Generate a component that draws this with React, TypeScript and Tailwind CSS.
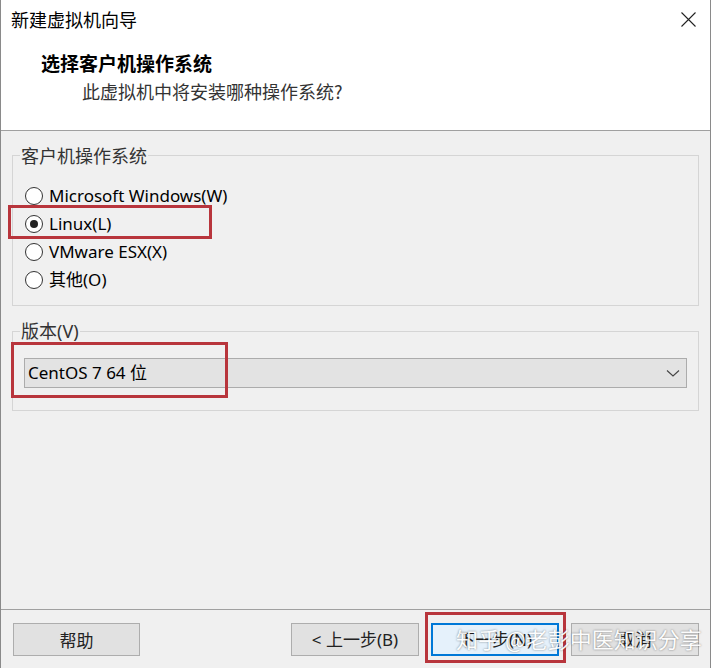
export default function App() {
  const radios = [
    { label: "Microsoft Windows(W)", checked: false },
    { label: "Linux(L)", checked: true },
    { label: "VMware ESX(X)", checked: false },
    { label: "其他(O)", checked: false },
  ];
  return (
    <div className="w-[712px] h-[668px] bg-white">
      <div className="relative w-[711px] h-[668px] bg-[#f0f0f0] border-x border-[#8a8a8a] flex flex-col font-['Noto_Sans','Noto_Sans_CJK_SC',sans-serif] text-black overflow-hidden">
        <header className="h-[131px] bg-white border-b border-[#a0a0a0] shrink-0">
          <div className="h-[38px] flex items-center justify-between pl-[10px] pr-[14px]">
            <span className="text-[18px] leading-[22px] font-['Noto_Sans_CJK_SC',sans-serif]">新建虚拟机向导</span>
            <svg width="15" height="15" viewBox="0 0 15 15">
              <path d="M0.5 0.5L14.5 14.5M14.5 0.5L0.5 14.5" stroke="#222" strokeWidth="1.1" fill="none" />
            </svg>
          </div>
          <div className="mt-[12px] pl-[40px] h-[26px] leading-[26px] text-[19px] font-bold font-['Noto_Sans_CJK_SC',sans-serif]">
            选择客户机操作系统
          </div>
          <div className="mt-[2px] pl-[81px] h-[26px] leading-[26px] text-[18px] text-[#333] font-['Noto_Sans_CJK_SC',sans-serif]">
            此虚拟机中将安装哪种操作系统?
          </div>
        </header>

        <fieldset className="mt-[13px] ml-[11px] w-[687px] border border-[#d5d5d5]">
          <legend className="ml-[7px] px-[1px] text-[18px] leading-[22px] text-[#333] font-['Noto_Sans_CJK_SC',sans-serif]">
            客户机操作系统
          </legend>
          <div className="mt-[16px] pb-[11px] pl-[12px] flex flex-col">
            {radios.map((r) => (
              <div key={r.label} className="h-[28px] flex items-center">
                <span className="w-[18px] h-[18px] rounded-full border border-[#333] bg-white flex items-center justify-center shrink-0">
                  {r.checked && <span className="w-[8px] h-[8px] rounded-full bg-[#222]" />}
                </span>
                <span className="ml-[6px] text-[17px] leading-[22px]">{r.label}</span>
              </div>
            ))}
          </div>
        </fieldset>

        <fieldset className="mt-[14px] ml-[11px] w-[687px] border border-[#d5d5d5]">
          <legend className="ml-[7px] px-[1px] text-[18px] leading-[22px] text-[#333]">版本(V)</legend>
          <div className="mt-[16px] pb-[22px] pl-[11px]">
            <div className="w-[663px] h-[30px] bg-[#e3e3e3] border border-[#acacac] flex items-center justify-between pl-[3px] pr-[6px]">
              <span className="text-[17px] leading-[22px]">CentOS 7 64 位</span>
              <svg width="14" height="7" viewBox="0 0 14 7">
                <path d="M1 0.5L7 6L13 0.5" stroke="#444" strokeWidth="1.1" fill="none" />
              </svg>
            </div>
          </div>
        </fieldset>

        <footer className="mt-auto h-[59px] border-t border-[#a0a0a0] flex items-start pt-[13px] pl-[12px] pr-[11px]">
          <button className="w-[127px] h-[33px] bg-[#e1e1e1] border border-[#adadad] text-[17px] text-[#222] font-['Noto_Sans_CJK_SC',sans-serif]">
            帮助
          </button>
          <div className="flex-1" />
          <div className="flex gap-[12px]">
            <button className="w-[128px] h-[33px] bg-[#e1e1e1] border border-[#adadad] text-[17px] text-[#222]">
              &lt; 上一步(B)
            </button>
            <button className="w-[128px] h-[33px] bg-[#e5f1fb] border-2 border-[#0078d7] text-[17px] text-[#222]">
              下一步(N)
            </button>
            <button className="w-[128px] h-[33px] bg-[#e1e1e1] border border-[#adadad] text-[17px] text-[#222]">
              取消
            </button>
          </div>
        </footer>

        {/* annotation boxes */}
        <div className="absolute left-[7px] top-[205px] w-[204px] h-[34px] border-[3px] border-[#b8353c]" />
        <div className="absolute left-[10px] top-[342px] w-[217px] h-[56px] border-[3px] border-[#b8353c]" />
        <div className="absolute left-[424px] top-[612px] w-[141px] h-[51px] border-[3px] border-[#b8353c]" />

        {/* watermark */}
        <div className="absolute left-[455px] top-[625px] text-[22px] leading-[26px] text-white whitespace-nowrap font-['Noto_Sans_CJK_SC',sans-serif] [text-shadow:0_0_2px_rgba(0,0,0,0.55)] opacity-90">
          知乎 @老彭中医知识分享
        </div>
      </div>
    </div>
  );
}
